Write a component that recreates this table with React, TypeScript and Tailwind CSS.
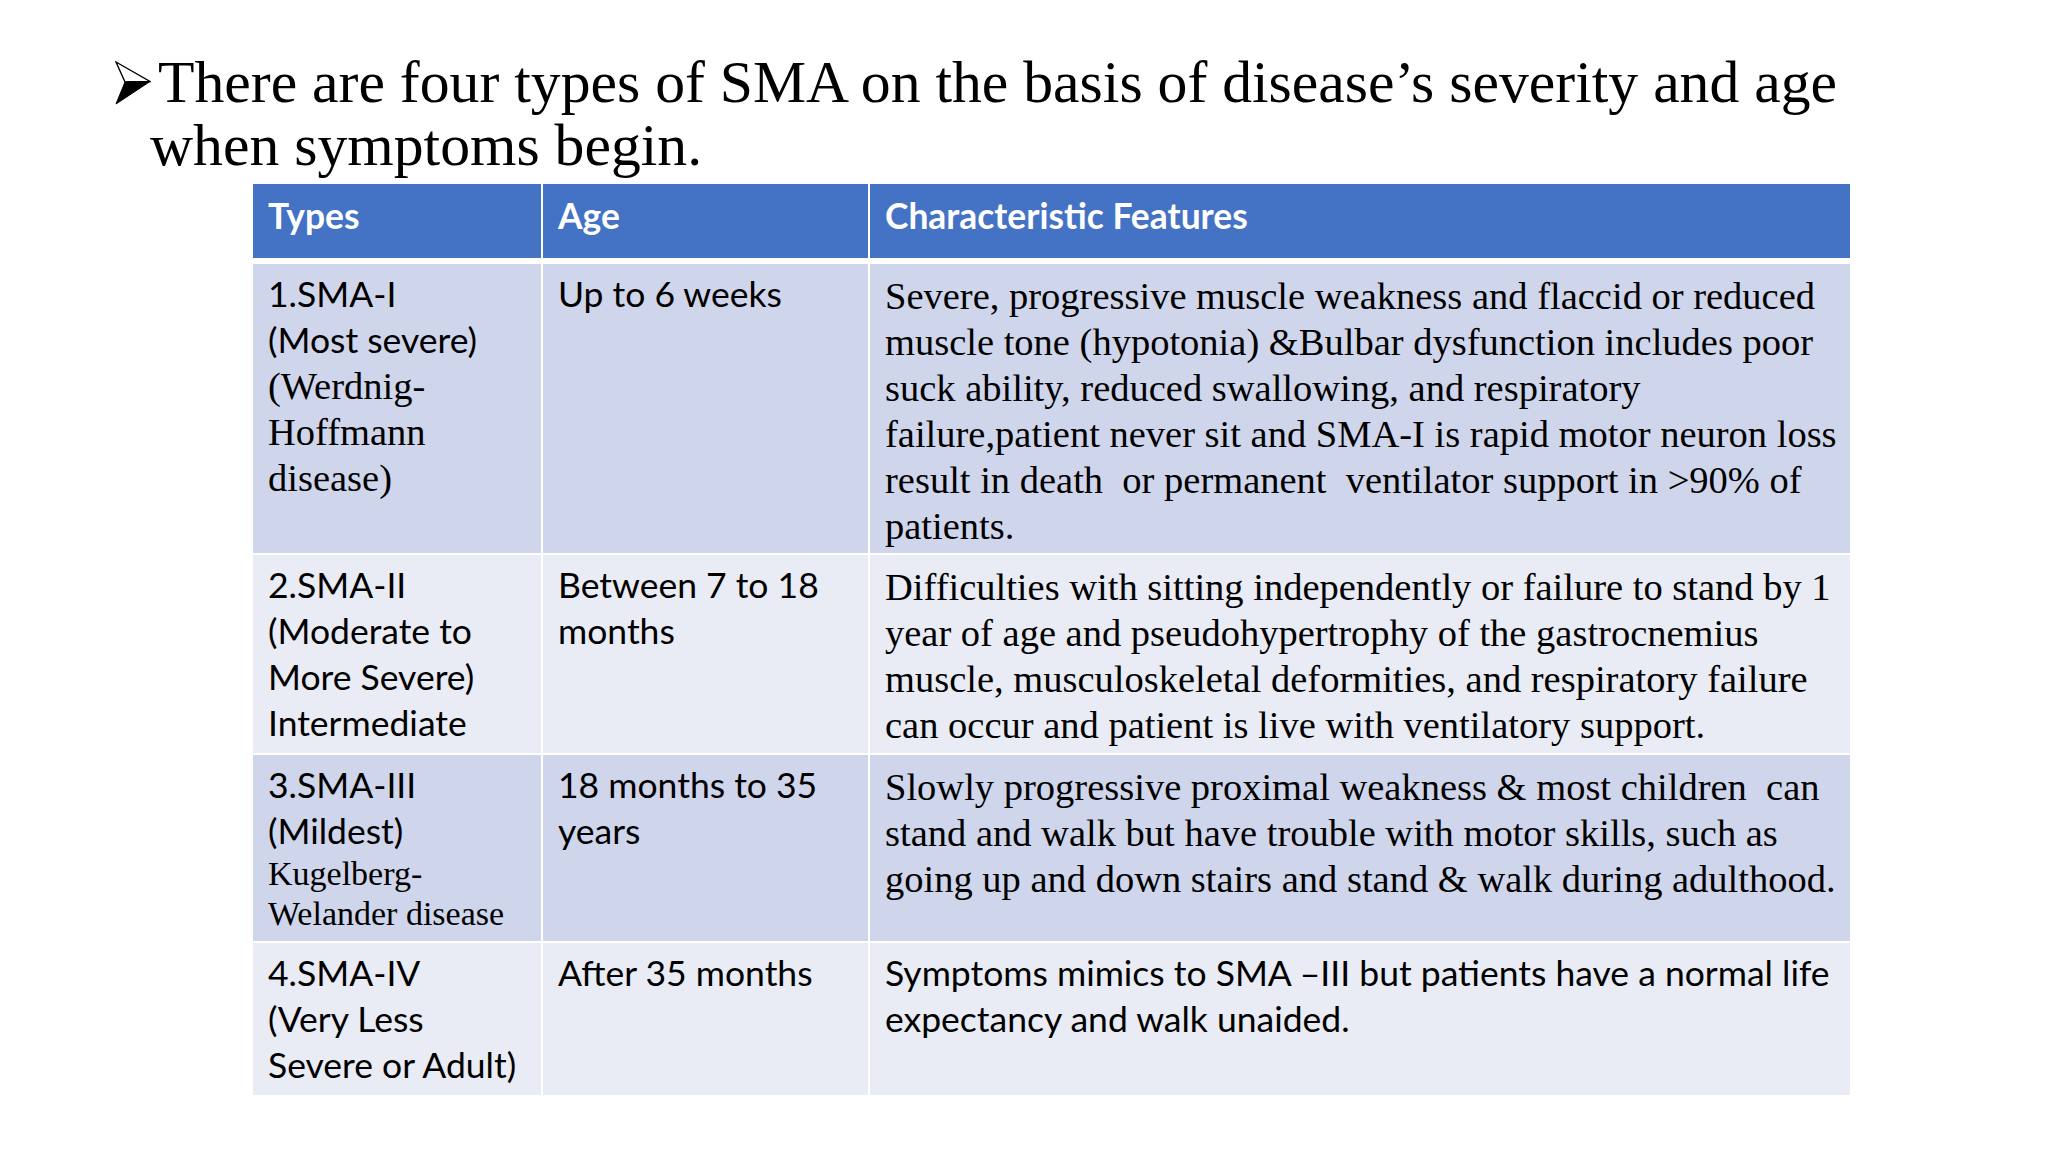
type Line = { t: string; f: "c" | "s" | "ss" };

interface Row {
  bg: string;
  h: string;
  types: Line[];
  age: Line[];
  features: Line[];
}

const c = (t: string): Line => ({ t, f: "c" });
const s = (t: string): Line => ({ t, f: "s" });
const ss = (t: string): Line => ({ t, f: "ss" });

const ROWS: Row[] = [
  {
    bg: "bg-[#cfd5ea]",
    h: "h-[289px]",
    types: [c("1.SMA-I"), c("(Most severe)"), s("(Werdnig-"), s("Hoffmann"), s("disease)")],
    age: [c("Up to 6 weeks")],
    features: [
      s("Severe, progressive muscle weakness and flaccid or reduced"),
      s("muscle tone (hypotonia) &Bulbar dysfunction includes poor"),
      s("suck ability, reduced swallowing, and respiratory"),
      s("failure,patient never sit and SMA-I is rapid motor neuron loss"),
      s("result in death  or permanent  ventilator support in >90% of"),
      s("patients."),
    ],
  },
  {
    bg: "bg-[#e9ebf5]",
    h: "h-[198px]",
    types: [c("2.SMA-II"), c("(Moderate to"), c("More Severe)"), c("Intermediate")],
    age: [c("Between 7 to 18"), c("months")],
    features: [
      s("Difficulties with sitting independently or failure to stand by 1"),
      s("year of age and pseudohypertrophy of the gastrocnemius"),
      s("muscle, musculoskeletal deformities, and respiratory failure"),
      s("can occur and patient is live with ventilatory support."),
    ],
  },
  {
    bg: "bg-[#cfd5ea]",
    h: "h-[186px]",
    types: [c("3.SMA-III"), c("(Mildest)"), ss("Kugelberg-"), ss("Welander disease")],
    age: [c("18 months to 35"), c("years")],
    features: [
      s("Slowly progressive proximal weakness & most children  can"),
      s("stand and walk but have trouble with motor skills, such as"),
      s("going up and down stairs and stand & walk during adulthood."),
    ],
  },
  {
    bg: "bg-[#e9ebf5]",
    h: "h-[152px]",
    types: [c("4.SMA-IV"), c("(Very Less"), c("Severe or Adult)")],
    age: [c("After 35 months")],
    features: [c("Symptoms mimics to SMA –III but patients have a normal life"), c("expectancy and walk unaided.")],
  },
];

const LINE_CLASS: Record<Line["f"], string> = {
  c: "font-['Lato',sans-serif] text-[35.5px] leading-[46px]",
  s: "font-['Liberation_Serif',serif] text-[38.5px] leading-[46px]",
  ss: "font-['Liberation_Serif',serif] text-[34px] leading-[40px]",
};

function Cell({ lines, bg }: { lines: Line[]; bg: string }) {
  const pad = lines[0].f === "c" ? "pt-[7px]" : "pt-[9px]";
  return (
    <div className={`${bg} ${pad} px-[15px] text-black`}>
      {lines.map((l, i) => (
        <div key={i} className={`${LINE_CLASS[l.f]} whitespace-pre`}>
          {l.t}
        </div>
      ))}
    </div>
  );
}

function Arrowhead() {
  return (
    <svg width="36" height="44" viewBox="0 0 36 44" className="shrink-0">
      <polygon points="1,1 35,20.5 10,21" fill="#fff" stroke="#000" strokeWidth="1.4" strokeLinejoin="miter" />
      <polygon points="10,21 35,20.5 1,43" fill="#000" stroke="#000" strokeWidth="1" />
    </svg>
  );
}

export default function App() {
  return (
    <div className="w-[2048px] h-[1152px] bg-white overflow-hidden">
      {/* Title */}
      <div className="pt-[51px] pl-[115px] font-['Liberation_Serif',serif] text-[59.7px] leading-[63px] text-black">
        <div className="flex items-center gap-[7px]">
          <Arrowhead />
          <span>There are four types of SMA on the basis of disease’s severity and age</span>
        </div>
        <div className="pl-[35px]">when symptoms begin.</div>
      </div>

      {/* Table */}
      <div className="mt-[7px] ml-[253px] w-[1597px] flex flex-col">
        <div className="grid grid-cols-[288px_325px_980px] gap-x-[2px] h-[74px]">
          {["Types", "Age", "Characteristic Features"].map((h) => (
            <div
              key={h}
              className="bg-[#4472c4] px-[15px] pt-[10px] font-['Lato',sans-serif] font-bold text-[35.4px] leading-[43px] text-white"
            >
              {h}
            </div>
          ))}
        </div>
        <div className="mt-[6px] flex flex-col gap-y-[2px]">
          {ROWS.map((r, i) => (
            <div key={i} className={`grid grid-cols-[288px_325px_980px] gap-x-[2px] ${r.h}`}>
              <Cell lines={r.types} bg={r.bg} />
              <Cell lines={r.age} bg={r.bg} />
              <Cell lines={r.features} bg={r.bg} />
            </div>
          ))}
        </div>
      </div>
    </div>
  );
}
